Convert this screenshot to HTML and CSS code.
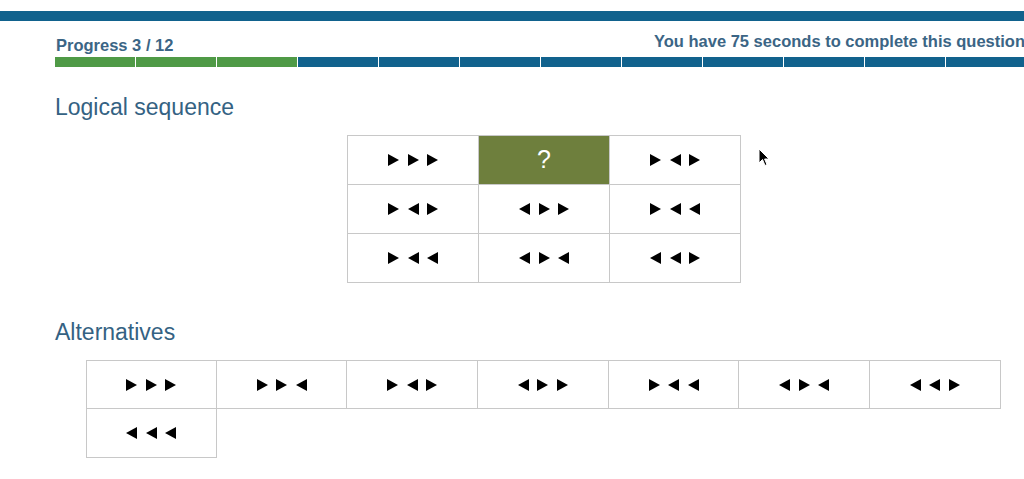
FILE: index.html
```html
<!DOCTYPE html>
<html>
<head>
<meta charset="utf-8">
<link rel="stylesheet" href="styles.css">
</head>
<body>
<div class="topbar"></div>
<div class="wrap">
  <div class="head">
    <div class="progress-label">Progress 3 / 12</div>
    <div class="timer">You have 75 seconds to complete this question</div>
  </div>
  <div class="segments">
    <div class="seg done"></div><div class="seg done"></div><div class="seg done"></div>
    <div class="seg"></div><div class="seg"></div><div class="seg"></div>
    <div class="seg"></div><div class="seg"></div><div class="seg"></div>
    <div class="seg"></div><div class="seg"></div><div class="seg"></div>
  </div>
</div>

<h2 class="title">Logical sequence</h2>
<div class="seq-area">
  <div class="matrix">
    <div class="cell"><span class="r"></span><span class="r"></span><span class="r"></span></div>
    <div class="cell q">?</div>
    <div class="cell"><span class="r"></span><span class="l"></span><span class="r"></span></div>
    <div class="cell"><span class="r"></span><span class="l"></span><span class="r"></span></div>
    <div class="cell"><span class="l"></span><span class="r"></span><span class="r"></span></div>
    <div class="cell"><span class="r"></span><span class="l"></span><span class="l"></span></div>
    <div class="cell"><span class="r"></span><span class="l"></span><span class="l"></span></div>
    <div class="cell"><span class="l"></span><span class="r"></span><span class="l"></span></div>
    <div class="cell"><span class="l"></span><span class="l"></span><span class="r"></span></div>
  </div>
  <svg class="cursor" width="14" height="20" viewBox="0 0 14 20"><path d="M1 1 L1 15 L4.5 11.5 L7 17.5 L9 16.6 L6.6 11 L11 11 Z" fill="#000" stroke="#fff" stroke-width="1"/></svg>
</div>

<h2 class="title alt-title">Alternatives</h2>
<div class="alts">
  <div class="cell"><span class="r"></span><span class="r"></span><span class="r"></span></div>
  <div class="cell"><span class="r"></span><span class="r"></span><span class="l"></span></div>
  <div class="cell"><span class="r"></span><span class="l"></span><span class="r"></span></div>
  <div class="cell"><span class="l"></span><span class="r"></span><span class="r"></span></div>
  <div class="cell"><span class="r"></span><span class="l"></span><span class="l"></span></div>
  <div class="cell"><span class="l"></span><span class="r"></span><span class="l"></span></div>
  <div class="cell"><span class="l"></span><span class="l"></span><span class="r"></span></div>
  <div class="cell"><span class="l"></span><span class="l"></span><span class="l"></span></div>
</div>
</body>
</html>
```
FILE: styles.css
```css
html, body {
  margin: 0;
  padding: 0;
  background: #fff;
  overflow: hidden;
  font-family: "Liberation Sans", Arial, sans-serif;
}
body {
  width: 1024px;
  height: 479px;
  position: relative;
}
.topbar {
  margin-top: 11px;
  height: 10px;
  background: #11628d;
}
.wrap {
  margin-left: 55px;
  width: 971px;
}
.head {
  display: flex;
  justify-content: space-between;
  align-items: flex-end;
  height: 33px;
}
.progress-label, .timer {
  font-weight: bold;
  font-size: 16.5px;
  color: #3b6585;
  line-height: 18px;
}
.progress-label { padding-left: 1px; padding-bottom: 0; }
.timer { white-space: nowrap; padding-bottom: 4px; margin-right: 1px; }
.segments {
  display: flex;
  gap: 1px;
  margin-top: 3px;
}
.seg {
  width: 80px;
  height: 10px;
  background: #11628d;
  flex: none;
}
.seg.done { background: #4f9a46; }

.title {
  margin: 0;
  font-weight: normal;
  font-size: 23px;
  line-height: 26px;
  color: #346283;
  padding-left: 55px;
  margin-top: 27px;
}
.alt-title { margin-top: 36px; }

.seq-area {
  position: relative;
  margin-top: 15px;
  margin-left: 347px;
  width: 394px;
}
.matrix {
  display: grid;
  grid-template-columns: repeat(3, 131px);
  grid-auto-rows: 49px;
  border-top: 1px solid #c8c8c8;
  border-left: 1px solid #c8c8c8;
  width: 393px;
}
.matrix .cell {
  border-right: 1px solid #c8c8c8;
  border-bottom: 1px solid #c8c8c8;
}
.alts {
  display: grid;
  grid-template-columns: repeat(7, 130.7px);
  grid-auto-rows: 49px;
  margin-left: 86px;
  margin-top: 15px;
  width: 915px;
}
.alts .cell {
  border-right: 1px solid #c8c8c8;
  border-bottom: 1px solid #c8c8c8;
}
.alts .cell:nth-child(-n+7) { border-top: 1px solid #c8c8c8; }
.alts .cell:nth-child(7n+1) { border-left: 1px solid #c8c8c8; }
.cell {
  display: flex;
  align-items: center;
  justify-content: center;
  gap: 8.5px;
}
.cell.q {
  background: #6e7f3d;
  color: #fff;
  font-size: 25px;
  padding-bottom: 2px;
}
.r, .l {
  display: block;
  width: 0;
  height: 0;
  border-top: 6.5px solid transparent;
  border-bottom: 6.5px solid transparent;
}
.r { border-left: 11px solid #000; }
.l { border-right: 11px solid #000; }
.cursor {
  position: absolute;
  left: 411px;
  top: 13px;
}
```
